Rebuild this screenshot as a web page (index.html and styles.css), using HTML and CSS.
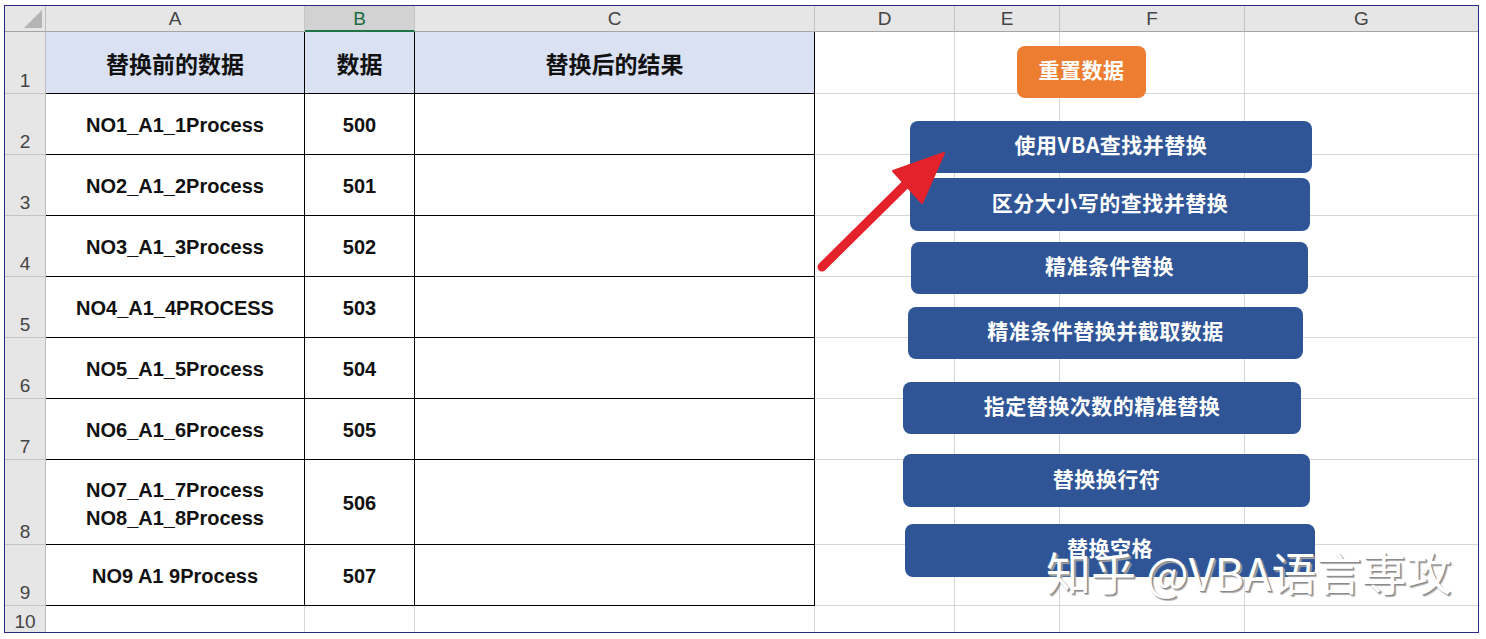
FILE: index.html
```html
<!DOCTYPE html>
<html lang="zh-CN">
<head>
  <meta charset="UTF-8">
  <title>VBA查找并替换</title>
  <link rel="stylesheet" href="styles.css">
</head>
<body>
  <div class="sheet">
    <div class="grid">
      <!-- 列标题 -->
      <div class="corner"></div>
      <div class="col">A</div>
      <div class="col sel">B</div>
      <div class="col">C</div>
      <div class="col">D</div>
      <div class="col">E</div>
      <div class="col">F</div>
      <div class="col last">G</div>

      <!-- 第1行 -->
      <div class="row">1</div>
      <div class="c t th">替换前的数据</div>
      <div class="c t th">数据</div>
      <div class="c t th">替换后的结果</div>
      <div class="c"></div><div class="c"></div><div class="c"></div><div class="c last"></div>

      <div class="row">2</div>
      <div class="c t">NO1_A1_1Process</div>
      <div class="c t">500</div>
      <div class="c t"></div>
      <div class="c"></div><div class="c"></div><div class="c"></div><div class="c last"></div>

      <div class="row">3</div>
      <div class="c t">NO2_A1_2Process</div>
      <div class="c t">501</div>
      <div class="c t"></div>
      <div class="c"></div><div class="c"></div><div class="c"></div><div class="c last"></div>

      <div class="row">4</div>
      <div class="c t">NO3_A1_3Process</div>
      <div class="c t">502</div>
      <div class="c t"></div>
      <div class="c"></div><div class="c"></div><div class="c"></div><div class="c last"></div>

      <div class="row">5</div>
      <div class="c t">NO4_A1_4PROCESS</div>
      <div class="c t">503</div>
      <div class="c t"></div>
      <div class="c"></div><div class="c"></div><div class="c"></div><div class="c last"></div>

      <div class="row">6</div>
      <div class="c t">NO5_A1_5Process</div>
      <div class="c t">504</div>
      <div class="c t"></div>
      <div class="c"></div><div class="c"></div><div class="c"></div><div class="c last"></div>

      <div class="row">7</div>
      <div class="c t">NO6_A1_6Process</div>
      <div class="c t">505</div>
      <div class="c t"></div>
      <div class="c"></div><div class="c"></div><div class="c"></div><div class="c last"></div>

      <div class="row">8</div>
      <div class="c t two">NO7_A1_7Process<br>NO8_A1_8Process</div>
      <div class="c t">506</div>
      <div class="c t"></div>
      <div class="c"></div><div class="c"></div><div class="c"></div><div class="c last"></div>

      <div class="row">9</div>
      <div class="c t">NO9 A1 9Process</div>
      <div class="c t">507</div>
      <div class="c t"></div>
      <div class="c"></div><div class="c"></div><div class="c"></div><div class="c last"></div>

      <div class="row end">10</div>
      <div class="c end"></div><div class="c end"></div><div class="c end"></div>
      <div class="c end"></div><div class="c end"></div><div class="c end"></div><div class="c end last"></div>
    </div>

    <!-- 表格上浮动的按钮 -->
    <div class="btn orange" id="reset">重置数据</div>
    <div class="btn" id="b1">使用VBA查找并替换</div>
    <div class="btn" id="b2">区分大小写的查找并替换</div>
    <div class="btn" id="b3">精准条件替换</div>
    <div class="btn" id="b4">精准条件替换并截取数据</div>
    <div class="btn" id="b5">指定替换次数的精准替换</div>
    <div class="btn" id="b6">替换换行符</div>
    <div class="btn" id="b7">替换空格</div>

    <svg class="arrow" width="1473" height="626" viewBox="0 0 1473 626">
      <line x1="817" y1="261" x2="906" y2="173" stroke="#e4222b" stroke-width="9" stroke-linecap="round"/>
      <polygon points="939,147 888,165 917,197" fill="#e4222b" stroke="#e4222b" stroke-width="2" stroke-linejoin="round"/>
    </svg>

    <div class="watermark">知乎 @VBA语言専攻</div>
  </div>
</body>
</html>
```

FILE: styles.css
```css
* {
  margin: 0;
  padding: 0;
  box-sizing: border-box;
}

body {
  background-color: #fff;
  font-family: "Liberation Sans", "Noto Sans CJK SC", sans-serif;
}

.sheet {
  position: relative;
  margin-top: 5px;
  margin-left: 4px;
  width: 1475px;
  height: 628px;
  border: 1px solid #2a2a80;
}

.grid {
  display: grid;
  grid-template-columns: 41px 259px 110px 400px 140px 105px 185px 233px;
  grid-template-rows: 26px 62px repeat(6, 61px) 85px 61px 26px;
}

.corner {
  position: relative;
  background-color: #e6e6e6;
  border-right: 1px solid #bdbdbd;
  border-bottom: 1px solid #a6a6a6;
}

.corner::after {
  content: "";
  position: absolute;
  right: 3px;
  bottom: 3px;
  border-style: solid;
  border-width: 0 0 18px 18px;
  border-color: transparent transparent #b4b4b4 transparent;
}

.col {
  display: flex;
  align-items: center;
  justify-content: center;
  background-color: #e6e6e6;
  border-right: 1px solid #c4c4c4;
  border-bottom: 1px solid #a6a6a6;
  color: #444;
  font-size: 19px;
  padding-top: 1px;
}

.col.sel {
  background-color: #d2d2d2;
  border-bottom: 2px solid #217346;
  color: #1d6b40;
}

.col.last,
.c.last {
  border-right: none;
}

.row {
  display: flex;
  align-items: flex-end;
  justify-content: center;
  background-color: #e6e6e6;
  border-right: 1px solid #bdbdbd;
  border-bottom: 1px solid #c4c4c4;
  color: #444;
  font-size: 19px;
  padding-bottom: 3px;
  line-height: 1;
}

.row.end {
  border-bottom: none;
  padding-bottom: 1px;
}

.c {
  border-right: 1px solid #d6d6d6;
  border-bottom: 1px solid #d6d6d6;
}

.c.end {
  border-bottom: none;
}

.t {
  display: flex;
  align-items: center;
  justify-content: center;
  text-align: center;
  border-right-color: #000;
  border-bottom-color: #000;
  font-weight: bold;
  font-size: 20px;
  color: #111;
  padding-top: 3px;
}

.t.two {
  line-height: 28px;
}

.th {
  background-color: #d9e1f2;
  font-size: 23px;
  padding-top: 0;
}

.btn {
  position: absolute;
  display: flex;
  align-items: center;
  justify-content: center;
  width: 402px;
  height: 52px;
  padding-bottom: 6px;
  border-radius: 8px;
  background-color: #2f5597;
  color: #fff;
  font-family: "Noto Sans CJK SC", sans-serif;
  font-weight: bold;
  font-size: 21px;
  letter-spacing: 0.5px;
}

.btn.orange {
  left: 1012px;
  top: 40px;
  width: 129px;
  background-color: #ed7d31;
}

#b1 { left: 905px; top: 115px; }
#b2 { left: 905px; top: 172px; width: 400px; height: 53px; }
#b3 { left: 906px; top: 236px; width: 397px; }
#b4 { left: 903px; top: 301px; width: 395px; }
#b5 { left: 898px; top: 376px; width: 398px; }
#b6 { left: 898px; top: 448px; width: 407px; height: 53px; }
#b7 { left: 900px; top: 518px; width: 410px; height: 53px; padding-bottom: 8px; }

.arrow {
  position: absolute;
  left: 0;
  top: 0;
  pointer-events: none;
}

.watermark {
  position: absolute;
  left: 1041px;
  top: 541px;
  font-family: "Noto Sans CJK SC", sans-serif;
  font-size: 45px;
  line-height: 1.1;
  color: #fff;
  white-space: nowrap;
  text-shadow: 1px 1px 0 #8a8a8a, 2px 2px 1px #a8a8a8;
}
```
